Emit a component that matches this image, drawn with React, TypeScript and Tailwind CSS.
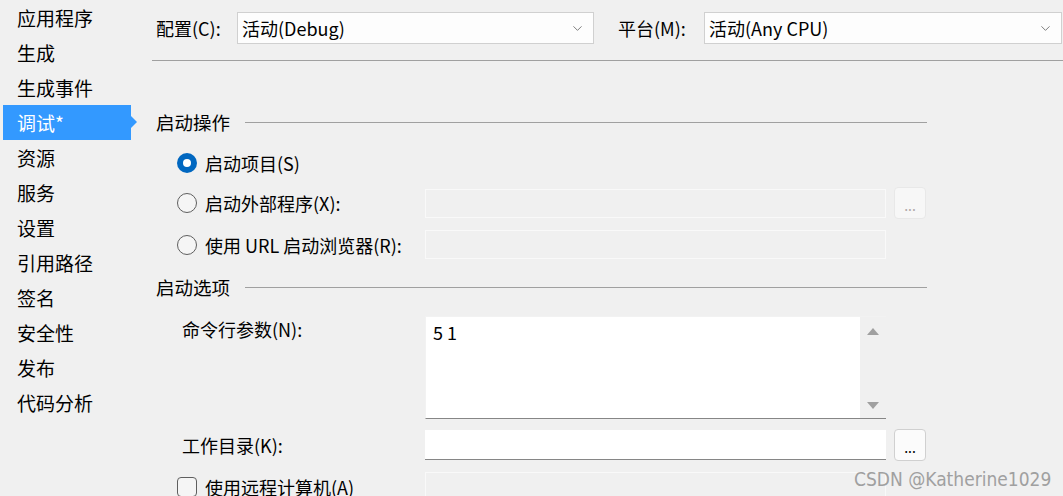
import { ChevronDown } from "lucide-react";

const font = { fontFamily: '"Noto Sans CJK SC", "Noto Sans", sans-serif' };

const navItems = ["应用程序", "生成", "生成事件", "调试*", "资源", "服务", "设置", "引用路径", "签名", "安全性", "发布", "代码分析"];

function Dropdown({ value, className }: { value: string; className: string }) {
  return (
    <div className={`flex items-center h-8 bg-[#fdfdfd] border border-[#d0d0d0] pl-[4px] pr-[8px] ${className}`}>
      <span className="flex-1 whitespace-nowrap">{value}</span>
      <ChevronDown className="w-[15px] h-[15px] text-[#606060]" strokeWidth={1.3} />
    </div>
  );
}

function Heading({ label }: { label: string }) {
  return (
    <div className="flex items-center h-[34px] w-[771px] shrink-0">
      <span className="w-[89px] whitespace-nowrap text-[18.5px]">{label}</span>
      <div className="flex-1 h-px bg-[#a0a0a0]" />
    </div>
  );
}

function Radio({ checked }: { checked?: boolean }) {
  return checked ? (
    <span className="flex items-center justify-center w-5 h-5 rounded-full bg-[#0067c0]">
      <span className="w-[8px] h-[8px] rounded-full bg-white" />
    </span>
  ) : (
    <span className="w-5 h-5 rounded-full border border-[#5f5f5f] bg-[#f5f5f5]" />
  );
}

function Browse({ disabled }: { disabled?: boolean }) {
  return (
    <div className={`ml-[8px] w-[32px] h-[32px] rounded-[4px] border flex items-end justify-center pb-[6px] text-[14px] leading-none ${disabled ? "bg-[#f7f7f7] border-[#e8e8e8] text-[#b0a8a8]" : "bg-[#fbfbfb] border-[#d0d0d0] text-black"}`}>
      ...
    </div>
  );
}

export default function App() {
  return (
    <div className="w-[1063px] h-[496px] overflow-hidden bg-[#f0f0f0] text-black text-[18px] leading-[24px] flex relative" style={font}>
      {/* Sidebar */}
      <div className="w-[152px] shrink-0 pl-[3px]">
        {navItems.map((item) => {
          const active = item === "调试*";
          return (
            <div key={item} className="relative h-[35px] w-[128px] flex items-center pl-[14px] text-[19px]">
              {active && (
                <>
                  <div className="absolute inset-0 bg-[#3399ff]" />
                  <div className="absolute right-[-6px] top-[11px] w-0 h-0 border-y-[6px] border-y-transparent border-l-[6px] border-l-[#3399ff]" />
                </>
              )}
              <span className={`relative ${active ? "text-white" : ""}`}>{item}</span>
            </div>
          );
        })}
      </div>

      {/* Main */}
      <div className="flex-1 flex flex-col">
        <div className="shrink-0 flex items-center h-[61px] border-b border-[#a0a0a0] pl-[4px] pb-[4px]">
          <span className="w-[81px] whitespace-nowrap">配置(C):</span>
          <Dropdown value="活动(Debug)" className="w-[357px]" />
          <span className="ml-[24px] w-[86px] whitespace-nowrap">平台(M):</span>
          <Dropdown value="活动(Any CPU)" className="w-[358px]" />
        </div>

        <div className="pl-[4px] pt-[44px] flex flex-col">
          <Heading label="启动操作" />

          <div className="shrink-0 flex items-center h-[34px] mt-[7px] pl-[21px] gap-[8px]">
            <Radio checked />
            <span>启动项目(S)</span>
          </div>

          <div className="shrink-0 flex items-center h-[32px] mt-[7px]">
            <div className="w-[269px] flex items-center pl-[21px] gap-[8px]">
              <Radio />
              <span className="whitespace-nowrap">启动外部程序(X):</span>
            </div>
            <div className="w-[461px] h-[29px] border border-[#f9f9f9]" />
            <Browse disabled />
          </div>

          <div className="shrink-0 flex items-center h-[29px] mt-[11px]">
            <div className="w-[269px] flex items-center pl-[21px] gap-[8px]">
              <Radio />
              <span className="whitespace-nowrap">使用 URL 启动浏览器(R):</span>
            </div>
            <div className="w-[461px] h-[29px] border border-[#f9f9f9]" />
          </div>

          <div className="shrink-0 mt-[11px]">
            <Heading label="启动选项" />
          </div>

          <div className="shrink-0 flex items-start mt-[12px]">
            <div className="w-[269px] pl-[26px] pt-[1px] whitespace-nowrap">命令行参数(N):</div>
            <div className="w-[461px] h-[103px] bg-white border-l border-t border-[#f2f2f2] border-b border-b-[#868686] flex">
              <div className="flex-1 pl-[7px] pt-[3px]">5 1</div>
              <div className="w-[26px] bg-[#f0f0f0] flex flex-col items-center justify-between pt-[11px] pb-[9px]">
                <span className="w-0 h-0 border-x-[6px] border-x-transparent border-b-[7px] border-b-[#a0a0a0]" />
                <span className="w-0 h-0 border-x-[6px] border-x-transparent border-t-[7px] border-t-[#a0a0a0]" />
              </div>
            </div>
          </div>

          <div className="shrink-0 flex items-center h-[32px] mt-[10px]">
            <div className="w-[269px] pl-[26px] whitespace-nowrap">工作目录(K):</div>
            <div className="w-[461px] h-[30px] bg-white border-b border-[#868686]" />
            <Browse />
          </div>

          <div className="shrink-0 flex items-start mt-[11px]">
            <div className="w-[269px] flex items-center pl-[21px] gap-[8px] pt-[3px]">
              <span className="w-5 h-5 rounded-[4px] border border-[#5f5f5f] bg-[#f5f5f5]" />
              <span className="whitespace-nowrap">使用远程计算机(A)</span>
            </div>
            <div className="w-[461px] h-[40px] border border-[#f9f9f9]" />
          </div>
        </div>
      </div>

      <div className="absolute left-[854px] top-[467px] text-[19px] leading-[24px] text-[#a0a0a0] whitespace-nowrap" style={{ fontFamily: '"DejaVu Sans Condensed", "DejaVu Sans", sans-serif' }}>
        CSDN @Katherine1029
      </div>
    </div>
  );
}
